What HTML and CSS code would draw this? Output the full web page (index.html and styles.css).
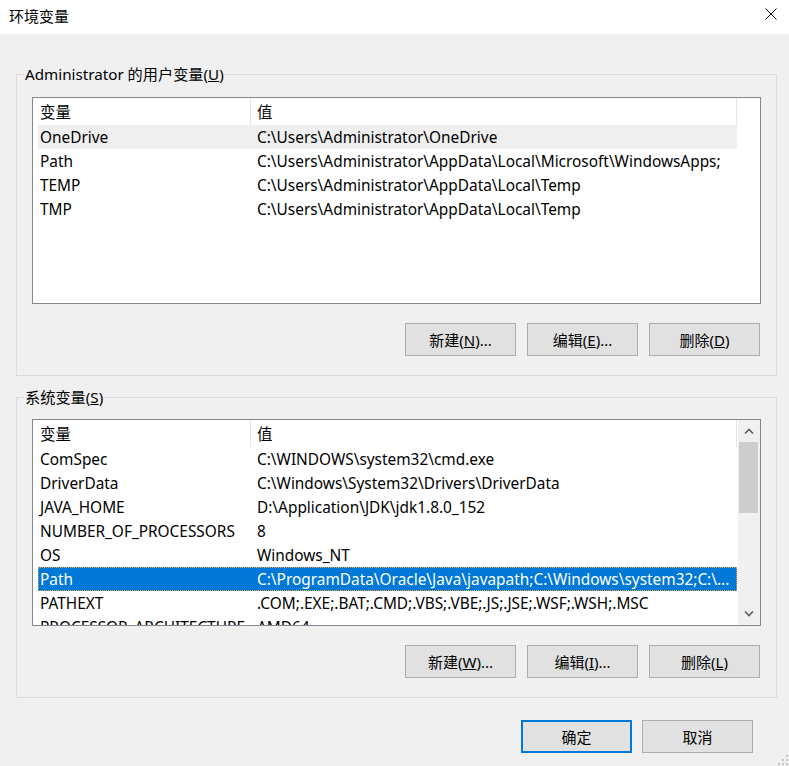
FILE: index.html
```html
<!DOCTYPE html>
<html lang="zh-CN">
<head>
  <meta charset="UTF-8">
  <meta name="viewport" content="width=device-width, initial-scale=1.0">
  <title>环境变量</title>
  <link rel="stylesheet" href="styles.css">
</head>
<body>
  <div class="window">
    <div class="titlebar">
      <span class="title">环境变量</span>
      <svg class="close" width="12" height="12" viewBox="0 0 12 12">
        <path d="M0.5 0.5 L11.5 11.5 M11.5 0.5 L0.5 11.5" stroke="#000" stroke-width="1" fill="none"/>
      </svg>
    </div>

    <div class="content">
      <fieldset class="group">
        <legend>Administrator 的用户变量(<u>U</u>)</legend>
        <div class="list">
          <div class="rows">
            <div class="row head"><span class="c1">变量</span><span class="c2">值</span></div>
            <div class="row hot"><span class="c1">OneDrive</span><span class="c2">C:\Users\Administrator\OneDrive</span></div>
            <div class="row"><span class="c1">Path</span><span class="c2">C:\Users\Administrator\AppData\Local\Microsoft\WindowsApps;</span></div>
            <div class="row"><span class="c1">TEMP</span><span class="c2">C:\Users\Administrator\AppData\Local\Temp</span></div>
            <div class="row"><span class="c1">TMP</span><span class="c2">C:\Users\Administrator\AppData\Local\Temp</span></div>
          </div>
          <div class="spacer"></div>
        </div>
        <div class="actions">
          <button>新建(<u>N</u>)...</button>
          <button>编辑(<u>E</u>)...</button>
          <button>删除(<u>D</u>)</button>
        </div>
      </fieldset>

      <fieldset class="group system">
        <legend>系统变量(<u>S</u>)</legend>
        <div class="list">
          <div class="rows">
            <div class="row head"><span class="c1">变量</span><span class="c2">值</span></div>
            <div class="row"><span class="c1">ComSpec</span><span class="c2">C:\WINDOWS\system32\cmd.exe</span></div>
            <div class="row"><span class="c1">DriverData</span><span class="c2">C:\Windows\System32\Drivers\DriverData</span></div>
            <div class="row"><span class="c1">JAVA_HOME</span><span class="c2">D:\Application\JDK\jdk1.8.0_152</span></div>
            <div class="row"><span class="c1">NUMBER_OF_PROCESSORS</span><span class="c2">8</span></div>
            <div class="row"><span class="c1">OS</span><span class="c2">Windows_NT</span></div>
            <div class="row sel"><span class="c1">Path</span><span class="c2">C:\ProgramData\Oracle\Java\javapath;C:\Windows\system32;C:\...</span></div>
            <div class="row"><span class="c1">PATHEXT</span><span class="c2">.COM;.EXE;.BAT;.CMD;.VBS;.VBE;.JS;.JSE;.WSF;.WSH;.MSC</span></div>
            <div class="row"><span class="c1">PROCESSOR_ARCHITECTURE</span><span class="c2">AMD64</span></div>
          </div>
          <div class="scrollbar">
            <div class="arrow">
              <svg width="10" height="6" viewBox="0 0 10 6"><path d="M1 5.5 L5 1.5 L9 5.5" stroke="#606060" stroke-width="1.6" fill="none"/></svg>
            </div>
            <div class="thumb"></div>
            <div class="track"></div>
            <div class="arrow">
              <svg width="10" height="6" viewBox="0 0 10 6"><path d="M1 0.5 L5 4.5 L9 0.5" stroke="#606060" stroke-width="1.6" fill="none"/></svg>
            </div>
          </div>
        </div>
        <div class="actions">
          <button>新建(<u>W</u>)...</button>
          <button>编辑(<u>I</u>)...</button>
          <button>删除(<u>L</u>)</button>
        </div>
      </fieldset>

      <div class="footer">
        <button class="default">确定</button>
        <button>取消</button>
      </div>
    </div>

    <svg class="grip" width="11" height="11" viewBox="0 0 11 11">
      <rect x="8" y="0" width="2" height="2" fill="#c4c4c4"/>
      <rect x="4" y="4" width="2" height="2" fill="#c4c4c4"/>
      <rect x="8" y="4" width="2" height="2" fill="#c4c4c4"/>
      <rect x="0" y="8" width="2" height="2" fill="#c4c4c4"/>
      <rect x="4" y="8" width="2" height="2" fill="#c4c4c4"/>
      <rect x="8" y="8" width="2" height="2" fill="#c4c4c4"/>
    </svg>
  </div>
</body>
</html>
```

FILE: styles.css
```css
body {
  margin: 0;
  background: #f0f0f0;
  font-family: "Noto Sans", "Noto Sans CJK SC", sans-serif;
  font-size: 15px;
  color: #000;
}
.window {
  position: relative;
  height: 766px;
  overflow: hidden;
}
.titlebar {
  height: 34px;
  background: #fff;
  display: flex;
  align-items: center;
  justify-content: space-between;
  padding: 0 12px 0 9px;
}
.title {
  line-height: 20px;
  margin-top: -2px;
}
.close {
  margin-top: -6px;
}
.content {
  padding: 0 12px 0 16px;
}
.group {
  margin: 30px 0 0;
  padding: 0 15px 19px;
  border: 1px solid #dcdcdc;
  min-width: 0;
}
.group.system {
  margin-top: 11px;
}
.group legend {
  padding: 0 1px;
  margin-left: -8px;
  line-height: 20px;
  font-size: 15.2px;
}
.list {
  margin-top: 13px;
  height: 205px;
  border: 1px solid #828790;
  background: #fff;
  display: flex;
  overflow: hidden;
  font-size: 15.4px;
}
.system .list {
  margin-top: 12px;
}
.rows {
  flex: 1;
  min-width: 0;
  padding-left: 5px;
  overflow: hidden;
}
.row {
  display: flex;
  height: 24px;
  align-items: center;
  white-space: nowrap;
}
.row.head {
  height: 27px;
  border-right: 1px solid #e5e5e5;
}
.c1 {
  flex: none;
  width: 212px;
  padding-left: 2px;
  box-sizing: border-box;
  overflow: hidden;
}
.c2 {
  flex: 1;
  padding-left: 7px;
  overflow: hidden;
}
.head .c2 {
  border-left: 1px solid #e5e5e5;
  padding-left: 6px;
  align-self: stretch;
  display: flex;
  align-items: center;
}
.row.hot {
  background: #efefef;
}
.row.sel {
  background: #0078d7;
  color: #fff;
  outline: 1px dotted #f0a040;
  outline-offset: -1px;
}
.spacer {
  flex: none;
  width: 23px;
}
.scrollbar {
  flex: none;
  width: 22px;
  margin-left: 1px;
  background: #f0f0f0;
  display: flex;
  flex-direction: column;
}
.arrow {
  height: 22px;
  display: flex;
  align-items: center;
  justify-content: center;
}
.thumb {
  height: 71px;
  margin: 0 2px 0 1px;
  background: #cdcdcd;
}
.track {
  flex: 1;
}
.actions {
  display: flex;
  justify-content: flex-end;
  gap: 11px;
  margin-top: 19px;
  padding-right: 1px;
}
.actions button:first-child {
  margin-right: 0;
}
button {
  width: 111px;
  height: 33px;
  padding: 0;
  background: #e1e1e1;
  border: 1px solid #adadad;
  font-family: "Noto Sans", "Noto Sans CJK SC", sans-serif;
  font-size: 15px;
  color: #000;
}
.footer {
  display: flex;
  justify-content: flex-end;
  gap: 10px;
  margin-top: 22px;
  padding-right: 24px;
}
button.default {
  border: 2px solid #0078d7;
}
.grip {
  position: absolute;
  right: 0;
  bottom: 0;
}
```
